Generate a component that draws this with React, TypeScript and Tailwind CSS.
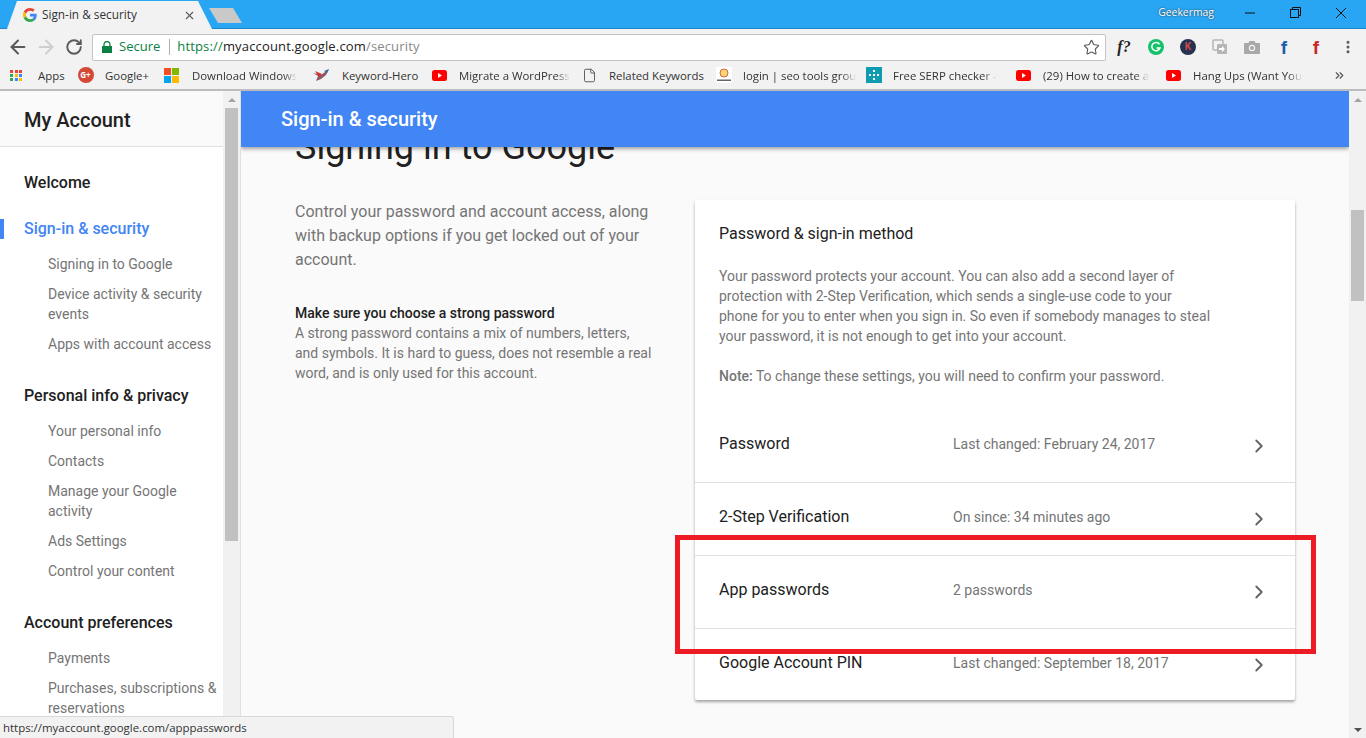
import React from "react";
import { ArrowLeft, ArrowRight, RotateCw, Star, ChevronRight, X, File, MoreVertical, ChevronsRight } from "lucide-react";

const GoogleG = ({ size = 16 }: { size?: number }) => (
  <svg width={size} height={size} viewBox="0 0 48 48">
    <path fill="#EA4335" d="M24 9.5c3.5 0 6.700 1.200 9.200 3.600l6.900-6.900C35.900 2.400 30.400 0 24 0 14.600 0 6.500 5.400 2.600 13.200l8 6.200C12.500 13.700 17.800 9.500 24 9.500z" />
    <path fill="#4285F4" d="M46.900 24.500c0-1.600-.1-3.100-.4-4.500H24v9h12.900c-.6 3-2.200 5.500-4.700 7.200l7.700 6c4.500-4.200 7-10.300 7-17.700z" />
    <path fill="#FBBC05" d="M10.500 28.600c-.5-1.400-.8-3-.8-4.600s.3-3.200.8-4.600l-8-6.200C.9 16.400 0 20.100 0 24s.9 7.600 2.600 10.800l7.900-6.200z" />
    <path fill="#34A853" d="M24 48c6.500 0 11.900-2.100 15.900-5.800l-7.700-6c-2.200 1.400-4.900 2.300-8.200 2.300-6.200 0-11.500-4.200-13.400-9.900l-8 6.200C6.500 42.600 14.600 48 24 48z" />
  </svg>
);

const YouTube = () => (
  <svg width="15" height="11" viewBox="0 0 15 11" className="shrink-0">
    <rect width="15" height="11" rx="2.500" fill="#f00" />
    <path d="M6 3l4 2.500L6 8z" fill="#fff" />
  </svg>
);

const AppsGrid = () => {
  const c = ["#ea4335", "#ea4335", "#ea4335", "#34a853", "#fbbc05", "#4285f4", "#34a853", "#4285f4", "#fbbc05"];
  return (
    <div className="grid grid-cols-3 gap-[1px] w-[13px] shrink-0">
      {c.map((x, i) => (
        <div key={i} className="w-[3px] h-[3px]" style={{ background: x }} />
      ))}
    </div>
  );
};

const GPlus = () => (
  <div className="w-4 h-4 rounded-full bg-[#d34836] text-white text-[8px] font-bold flex items-center justify-center shrink-0">G+</div>
);

const WinLogo = () => (
  <div className="grid grid-cols-2 gap-[1px] w-[15px] h-[15px] shrink-0">
    <div className="bg-[#f25022]" />
    <div className="bg-[#7fba00]" />
    <div className="bg-[#00a4ef]" />
    <div className="bg-[#ffb900]" />
  </div>
);

const HeroIcon = () => (
  <svg width="17" height="14" viewBox="0 0 17 14" className="shrink-0">
    <path d="M0 5l8 2 8-6-3 6-5 4-5 2 2-5z" fill="#8a5a6a" />
    <path d="M2 3l7 3-3 3z" fill="#d0342c" />
    <path d="M11 3l5-2-2 4z" fill="#3a6ea5" />
  </svg>
);

const SunIcon = () => (
  <svg width="16" height="16" viewBox="0 0 16 16" className="shrink-0">
    <rect width="16" height="16" fill="#fff" />
    <circle cx="8" cy="6" r="4" fill="#f7d774" stroke="#e2603c" strokeWidth="1" />
    <rect x="1" y="12.500" width="14" height="1.500" fill="#666" />
  </svg>
);

const TealIcon = () => (
  <div className="w-4 h-4 bg-[#0f9bb0] flex items-center justify-center shrink-0">
    <svg width="10" height="10" viewBox="0 0 10 10" fill="#fff">
      <rect x="4" y="0" width="2" height="2" />
      <rect x="4" y="4" width="2" height="2" />
      <rect x="4" y="8" width="2" height="2" />
      <rect x="0" y="4" width="2" height="2" />
      <rect x="8" y="4" width="2" height="2" />
    </svg>
  </div>
);

const Bookmark = ({ icon, label, gap = 11, w, fade }: { icon: React.ReactNode; label: string; gap?: number; w: number; fade?: boolean }) => {
  const mask = fade ? "linear-gradient(to right, black calc(100% - 14px), transparent)" : undefined;
  return (
    <div className="flex items-center shrink-0" style={{ width: w }}>
      <div className="w-[17px] flex justify-center shrink-0">{icon}</div>
      <span className="whitespace-nowrap text-[11.4px] text-[#333]" style={{ marginLeft: gap, maskImage: mask, WebkitMaskImage: mask }}>
        {label}
      </span>
    </div>
  );
};

const NavHead = ({ children, active, mt }: { children: React.ReactNode; active?: boolean; mt: string }) => (
  <div className={`relative pl-6 text-[16px] leading-5 font-medium ${mt} ${active ? "text-[#4285f4]" : "text-[#212121]"}`}>
    {active && <div className="absolute left-0 top-0 w-1 h-5 bg-[#4285f4]" />}
    {children}
  </div>
);

const NavSub = ({ children }: { children: React.ReactNode }) => (
  <div className="pl-12 pr-1 mt-[10px] text-[14px] leading-5 text-[#757575]">{children}</div>
);

const Row = ({ title, value, border = true }: { title: string; value: string; border?: boolean }) => (
  <div className={`h-[73px] flex items-center pl-6 pr-[25px] border-t ${border ? "border-[#e0e0e0]" : "border-transparent"}`}>
    <div className="w-[234px] text-[16px] text-[#212121] -translate-y-[2px]">{title}</div>
    <div className="flex-1 text-[14px] text-[#757575] -translate-y-[2px]">{value}</div>
    <ChevronRight size={22} strokeWidth={2} className="text-[#5f6368]" />
  </div>
);

const Slot = ({ children }: { children: React.ReactNode }) => (
  <div className="w-8 shrink-0 flex items-center justify-center">{children}</div>
);

export default function App() {
  return (
    <div className="relative w-[1366px] h-[738px] overflow-hidden flex flex-col bg-white" style={{ fontFamily: "Roboto, 'Noto Sans', sans-serif" }}>
      {/* title bar */}
      <div className="h-[29px] bg-[#29a6f3] border-b border-[#1e86c8] flex shrink-0 relative" style={{ fontFamily: "'Open Sans', 'Noto Sans', sans-serif" }}>
        <div
          className="absolute left-[7px] top-[1px] w-[205px] h-[28px] bg-[#f2f2f2] flex items-center pl-[15px]"
          style={{ clipPath: "polygon(0 100%, 10px 0, 191px 0, 205px 100%)" }}
        >
          <div className="w-4 h-4 flex items-center justify-center">
            <GoogleG size={14} />
          </div>
          <span className="ml-[4px] text-[11.8px] text-[#333]">Sign-in &amp; security</span>
          <X size={13} strokeWidth={2} className="absolute left-[176px] text-[#5a5a5a]" />
        </div>
        <div
          className="absolute left-[209px] top-[8px] w-[33px] h-[15px] bg-[#c9c9c9]"
          style={{ clipPath: "polygon(0 0, 24px 0, 33px 100%, 9px 100%)" }}
        />
        <div className="ml-auto flex items-center pb-[3px]">
          <span className="text-[10.4px] text-white mr-[31px] [text-shadow:0_0_2px_#222]">Geekermag</span>
          <svg width="10" height="2" viewBox="0 0 10 2" className="mr-[35px]">
            <rect y="0.500" width="10" height="1" fill="#111" />
          </svg>
          <svg width="11" height="11" viewBox="0 0 11 11" fill="none" stroke="#111" strokeWidth="1" className="mr-[35px]">
            <rect x="0.500" y="2.500" width="8" height="8" />
            <path d="M2.500 2.500V0.500h8v8h-2" />
          </svg>
          <svg width="10" height="10" viewBox="0 0 10 10" fill="none" stroke="#111" strokeWidth="1" className="mr-[20px]">
            <path d="M0 0l10 10M10 0L0 10" />
          </svg>
        </div>
      </div>

      {/* toolbar */}
      <div className="h-[33px] bg-[#f2f2f2] flex items-center shrink-0 pt-[3px]">
        <ArrowLeft size={22} strokeWidth={2.200} className="ml-[7px] text-[#5a5a5a]" />
        <ArrowRight size={22} strokeWidth={2.200} className="ml-[6px] text-[#cfcfcf]" />
        <RotateCw size={18} strokeWidth={2.500} className="ml-[8px] text-[#5a5a5a]" />
        <div className="ml-[9px] w-[1014px] h-[27px] bg-white border border-[#c4c4c4] rounded-[2px] flex items-center text-[13px] shrink-0" style={{ fontFamily: "'Open Sans', sans-serif" }}>
          <svg width="10" height="12" viewBox="0 0 10 12" className="ml-[9px] shrink-0">
            <path d="M2 5V3.500a3 3 0 0 1 6 0V5" fill="none" stroke="#0b8043" strokeWidth="1.300" />
            <rect y="5" width="10" height="7" fill="#0b8043" />
          </svg>
          <span className="ml-[7px] text-[#0b8043]">Secure</span>
          <span className="ml-[9px] w-px h-4 bg-[#b0b0b0]" />
          <span className="ml-[7px] tracking-[0.16px]">
            <span className="text-[#0b8043]">https://</span>
            <span className="text-[#222]">myaccount.google.com</span>
            <span className="text-[#888]">/security</span>
          </span>
          <Star size={17} strokeWidth={1.600} className="ml-auto mr-[5px] text-[#5a5a5a]" />
        </div>
        <div className="ml-[2px] flex">
          <Slot>
            <span className="text-[16px] font-bold italic text-[#222] leading-none" style={{ fontFamily: "'Liberation Serif', serif" }}>f?</span>
          </Slot>
          <Slot>
            <svg width="16" height="16" viewBox="0 0 16 16">
              <circle cx="8" cy="8" r="8" fill="#15c26b" />
              <path d="M11.500 5.200A4.200 4.200 0 1 0 12 9H8.500" fill="none" stroke="#fff" strokeWidth="1.500" />
            </svg>
          </Slot>
          <Slot>
            <div className="w-4 h-4 rounded-full bg-[#263250] flex items-center justify-center">
              <span className="text-[#d04a4a] text-[10px] font-bold leading-none">K</span>
            </div>
          </Slot>
          <Slot>
            <svg width="16" height="16" viewBox="0 0 16 16">
              <rect x="1" y="1" width="10" height="10" rx="1" fill="none" stroke="#b5b5b5" strokeWidth="1.500" />
              <rect x="5" y="5" width="10" height="10" rx="1" fill="#b5b5b5" />
              <path d="M7 9h3V7l3 3-3 3v-2H7z" fill="#fff" />
            </svg>
          </Slot>
          <Slot>
            <svg width="16" height="14" viewBox="0 0 16 14">
              <path d="M1 3h3.500l1-2h5l1 2H15a1 1 0 0 1 1 1v9a1 1 0 0 1-1 1H1a1 1 0 0 1-1-1V4a1 1 0 0 1 1-1z" fill="#a8a8a8" />
              <circle cx="8" cy="8" r="3.200" fill="#f2f2f2" />
              <circle cx="8" cy="8" r="2" fill="#a8a8a8" />
            </svg>
          </Slot>
          <Slot>
            <span className="text-[19px] font-bold text-[#1a5fa8] leading-none" style={{ fontFamily: "'Liberation Sans', sans-serif" }}>f</span>
          </Slot>
          <Slot>
            <span className="text-[19px] font-bold text-[#c62828] leading-none" style={{ fontFamily: "'Liberation Sans', sans-serif" }}>f</span>
          </Slot>
          <Slot>
            <MoreVertical size={16} strokeWidth={2.500} className="text-[#5a5a5a]" />
          </Slot>
        </div>
      </div>

      {/* bookmarks */}
      <div className="h-[29px] bg-[#f2f2f2] flex items-center pl-[8px] shrink-0 border-b-[2px] border-[#bdbdbd]" style={{ fontFamily: "'Open Sans', sans-serif" }}>
        <Bookmark w={69} gap={13} icon={<AppsGrid />} label="Apps" />
        <Bookmark w={86} icon={<GPlus />} label="Google+" />
        <Bookmark w={150} gap={12} icon={<WinLogo />} label="Download Windows" fade />
        <Bookmark w={118} gap={12} icon={<HeroIcon />} label="Keyword-Hero" />
        <Bookmark w={150} icon={<YouTube />} label="Migrate a WordPress" fade />
        <Bookmark w={134} icon={<File size={15} strokeWidth={1.500} className="text-[#555]" />} label="Related Keywords" />
        <Bookmark w={150} icon={<SunIcon />} label="login | seo tools grou" fade />
        <Bookmark w={150} icon={<TealIcon />} label="Free SERP checker -" fade />
        <Bookmark w={150} icon={<YouTube />} label="(29) How to create a" fade />
        <Bookmark w={150} icon={<YouTube />} label="Hang Ups (Want You" fade />
        <ChevronsRight size={13} strokeWidth={2.200} className="ml-[18px] text-[#555]" />
      </div>

      {/* page */}
      <div className="flex-1 flex min-h-0">
        {/* sidebar */}
        <div className="w-[223px] shrink-0 bg-white overflow-hidden">
          <div className="h-[56px] bg-[#fafafa] border-b border-[#e0e0e0] flex items-center pl-6 text-[20px] font-medium text-[#212121] pt-[3px]">My Account</div>
          <NavHead mt="mt-[26px]">Welcome</NavHead>
          <NavHead mt="mt-[26px]" active>Sign-in &amp; security</NavHead>
          <div className="pt-[5px]">
            <NavSub>Signing in to Google</NavSub>
            <NavSub>Device activity &amp; security events</NavSub>
            <NavSub>Apps with account access</NavSub>
          </div>
          <NavHead mt="mt-[32px]">Personal info &amp; privacy</NavHead>
          <div className="pt-[5px]">
            <NavSub>Your personal info</NavSub>
            <NavSub>Contacts</NavSub>
            <NavSub>Manage your Google activity</NavSub>
            <NavSub>Ads Settings</NavSub>
            <NavSub>Control your content</NavSub>
          </div>
          <NavHead mt="mt-[32px]">Account preferences</NavHead>
          <div className="pt-[5px]">
            <NavSub>Payments</NavSub>
            <NavSub>Purchases, subscriptions &amp; reservations</NavSub>
          </div>
        </div>

        {/* sidebar scrollbar */}
        <div className="w-[17px] shrink-0 bg-[#f1f1f1] flex flex-col items-center">
          <div className="h-[17px] flex items-center justify-center">
            <div className="w-0 h-0 border-x-[4px] border-x-transparent border-b-[4px] border-b-[#a3a3a3]" />
          </div>
          <div className="w-[13px] h-[433px] bg-[#c1c1c1]" />
        </div>

        {/* main */}
        <div className="flex-1 min-w-0 bg-[#fafafa] border-l border-[#e0e0e0] overflow-hidden">
          <div className="relative z-10 h-[56px] bg-[#4285f4] flex items-center pl-[40px] pb-[1px] text-[20px] font-medium text-white shadow-[0_2px_4px_rgba(0,0,0,0.35)]">Sign-in &amp; security</div>
          <div className="pl-[54px] -mt-[23px]">
            <h1 className="text-[36px] leading-[46px] text-[#212121]">Signing in to Google</h1>
            <div className="flex mt-[30px]">
              <div className="w-[400px] shrink-0">
                <p className="text-[16px] leading-6 text-[#757575] w-[360px]">Control your password and account access, along with backup options if you get locked out of your account.</p>
                <h2 className="mt-[31px] text-[14px] leading-5 font-medium text-[#212121]">Make sure you choose a strong password</h2>
                <p className="text-[14px] leading-5 text-[#757575] w-[360px]">A strong password contains a mix of numbers, letters, and symbols. It is hard to guess, does not resemble a real word, and is only used for this account.</p>
              </div>
              <div className="w-[600px] h-[500px] bg-white rounded-[2px] shadow-[0_2px_3px_rgba(0,0,0,0.35)] shrink-0">
                <div className="pl-6 pr-[84px] pt-[24px]">
                  <div className="text-[16px] leading-5 text-[#212121]">Password &amp; sign-in method</div>
                  <p className="mt-[22px] text-[14px] leading-5 text-[#757575]">Your password protects your account. You can also add a second layer of protection with 2-Step Verification, which sends a single-use code to your phone for you to enter when you sign in. So even if somebody manages to steal your password, it is not enough to get into your account.</p>
                  <p className="mt-[20px] text-[14px] leading-5 text-[#757575]"><span className="font-medium">Note:</span> To change these settings, you will need to confirm your password.</p>
                </div>
                <div className="mt-[23px]">
                  <Row title="Password" value="Last changed: February 24, 2017" border={false} />
                  <Row title="2-Step Verification" value="On since: 34 minutes ago" />
                  <Row title="App passwords" value="2 passwords" />
                  <Row title="Google Account PIN" value="Last changed: September 18, 2017" />
                </div>
              </div>
            </div>
          </div>
        </div>

        {/* page scrollbar */}
        <div className="w-[17px] shrink-0 bg-[#f1f1f1] flex flex-col items-center relative">
          <div className="h-[17px] flex items-center justify-center">
            <div className="w-0 h-0 border-x-[4px] border-x-transparent border-b-[4px] border-b-[#a3a3a3]" />
          </div>
          <div className="mt-[102px] w-[13px] h-[91px] bg-[#c1c1c1]" />
          <div className="absolute bottom-[6px] w-0 h-0 border-x-[4px] border-x-transparent border-t-[4px] border-t-[#505050]" />
        </div>
      </div>

      {/* red highlight */}
      <div className="absolute left-[675px] top-[535px] w-[641px] h-[119px] border-[5px] border-[#ed1c24] z-20" />

      {/* status bubble */}
      <div className="absolute left-0 bottom-0 w-[454px] h-[22px] bg-[#f2f2f2] border-t border-r border-[#d8d8d8] rounded-tr-[3px] flex items-center pl-[3px] pt-[1px] text-[11.45px] text-[#333] z-20" style={{ fontFamily: "'Open Sans', sans-serif" }}>
        https://myaccount.google.com/apppasswords
      </div>
    </div>
  );
}
